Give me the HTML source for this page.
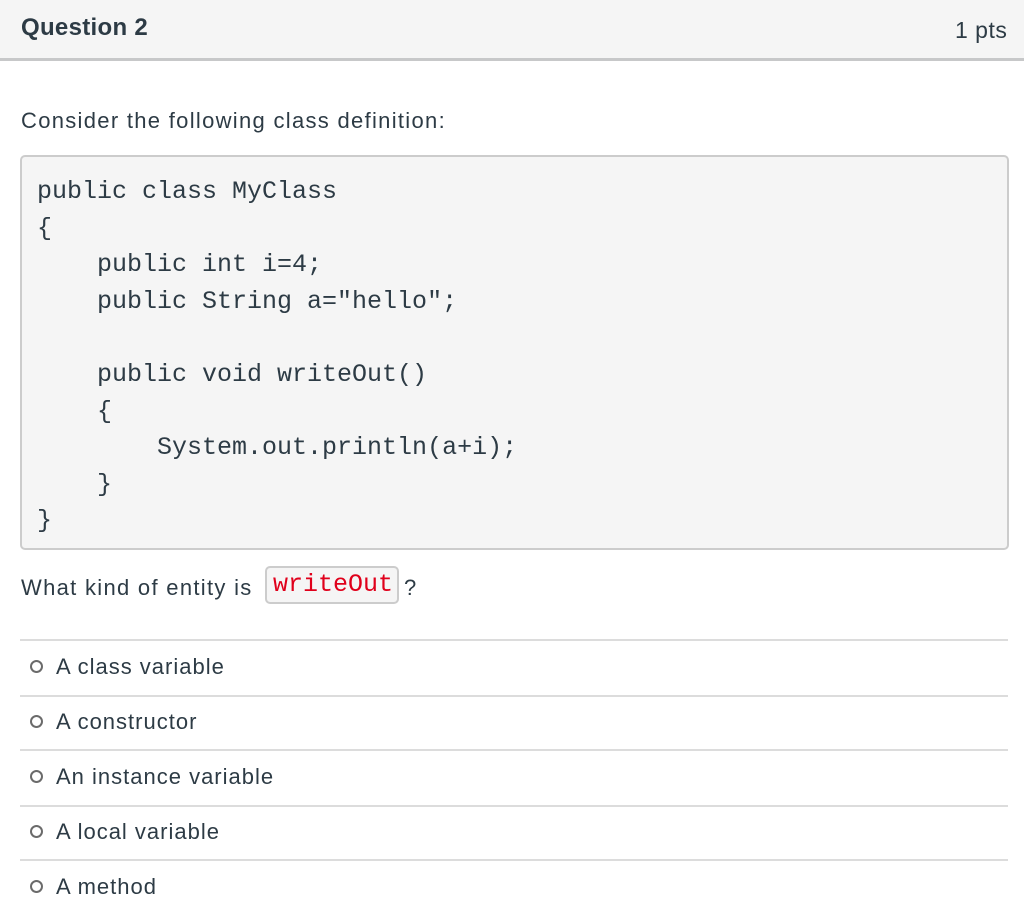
<!DOCTYPE html>
<html><head><meta charset="utf-8"><style>
body{margin:0;width:1024px;height:923px;background:#fff;position:relative;overflow:hidden;font-family:"Liberation Sans",sans-serif;color:#2d3b45}
.hdr{position:absolute;left:0;top:0;width:1024px;height:58px;background:#f5f5f5;border-bottom:3px solid #c7c8c9}
.t{position:absolute;white-space:nowrap}
.code{position:absolute;left:20px;top:155px;width:985px;height:391px;background:#f5f5f5;border:2px solid #ccc;border-radius:5px}
.code pre{margin:0;position:absolute;left:15px;top:17px;font-family:"Liberation Mono",monospace;font-size:25px;line-height:36.6px;color:#2d3b45}
.hr{position:absolute;left:20px;width:988px;height:2px;background:#dcdcdc}
.r{position:absolute;left:30px;width:9px;height:9px;border:2px solid #6b6b6b;border-radius:50%}
.o{position:absolute;left:56px;font-size:22px;white-space:nowrap;letter-spacing:1px}
.p{font-size:22px;letter-spacing:1.3px}
</style></head><body>
<div class="hdr"></div>
<div class="t" style="left:21px;top:14px;font-size:24px;font-weight:bold;letter-spacing:0.3px">Question 2</div>
<div class="t" style="left:955px;top:17px;font-size:23px;letter-spacing:0.5px">1 pts</div>
<div class="t p" style="left:21px;top:108px">Consider the following class definition:</div>
<div class="code"><pre>public class MyClass
{
    public int i=4;
    public String a="hello";

    public void writeOut()
    {
        System.out.println(a+i);
    }
}</pre></div>
<div class="t p" style="left:21px;top:575px">What kind of entity is</div>
<div class="t" style="left:265px;top:566px;height:38px;width:134px;background:#f5f5f5;border:2px solid #ccc;border-radius:5px;box-sizing:border-box"></div>
<div class="t" style="left:273px;top:570px;font-family:'Liberation Mono',monospace;font-size:25px;color:#e0001b">writeOut</div>
<div class="t p" style="left:404px;top:575px">?</div>
<div class="hr" style="top:639px"></div>
<div class="r" style="top:660px"></div><div class="o" style="top:654px">A class variable</div>
<div class="hr" style="top:695px"></div>
<div class="r" style="top:715px"></div><div class="o" style="top:709px">A constructor</div>
<div class="hr" style="top:749px"></div>
<div class="r" style="top:770px"></div><div class="o" style="top:764px">An instance variable</div>
<div class="hr" style="top:805px"></div>
<div class="r" style="top:825px"></div><div class="o" style="top:819px">A local variable</div>
<div class="hr" style="top:859px"></div>
<div class="r" style="top:880px"></div><div class="o" style="top:874px">A method</div>
</body></html>
